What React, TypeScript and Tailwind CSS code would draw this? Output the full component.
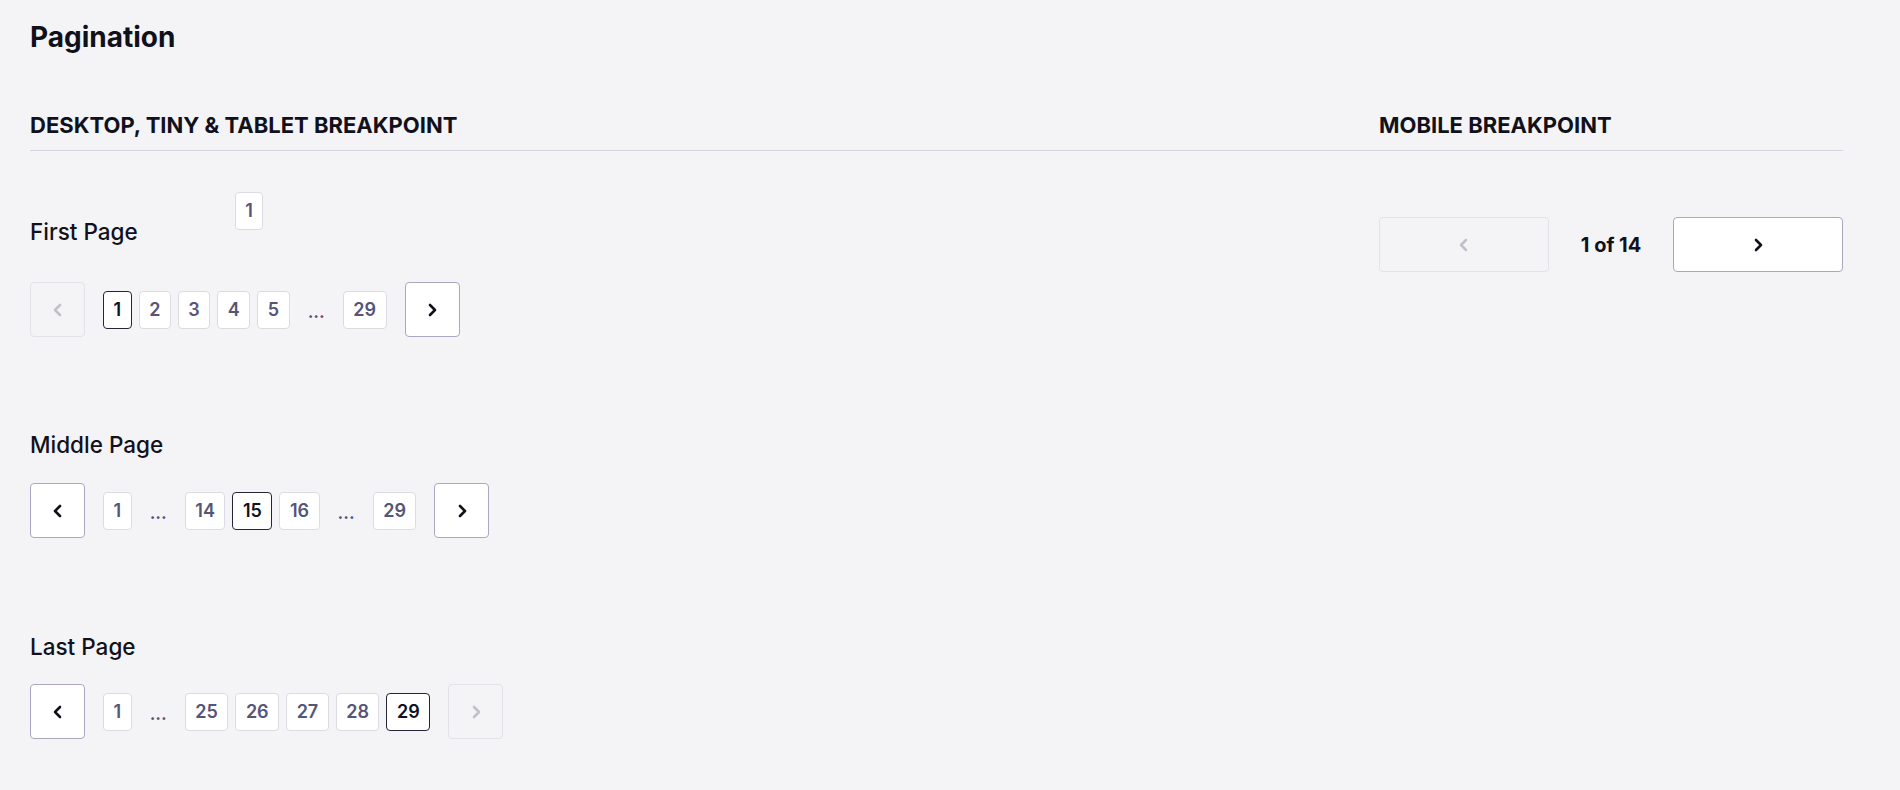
import React from "react";

type Item = number | "...";

const Chevron: React.FC<{ dir: "left" | "right"; disabled?: boolean }> = ({ dir, disabled }) => (
  <svg width="10" height="14" viewBox="0 0 10 14" fill="none">
    <path
      d={dir === "right" ? "M3 2l5 5-5 5" : "M7 2L2 7l5 5"}
      stroke={disabled ? "#c2c1ca" : "#11111c"}
      strokeWidth="2.6"
      strokeLinecap="round"
      strokeLinejoin="round"
    />
  </svg>
);

const NavButton: React.FC<{ dir: "left" | "right"; disabled?: boolean; wide?: boolean }> = ({ dir, disabled, wide }) => (
  <button
    className={`${wide ? "flex-1" : "w-[55px]"} h-[55px] shrink-0 flex items-center justify-center rounded-[4px] border ${
      disabled ? "bg-[#f4f4f7] border-[#e2e2e8]" : "bg-white border-[#a9a8c0]"
    }`}
  >
    <Chevron dir={dir} disabled={disabled} />
  </button>
);

const PageBox: React.FC<{ n: number; active?: boolean }> = ({ n, active }) => (
  <div
    className={`h-[38px] px-[9.5px] flex items-center justify-center rounded-[4px] border bg-white text-[18px] font-semibold leading-none ${
      active ? "border-[#25253a] text-[#11111c]" : "border-[#dcdbe3] text-[#55547a]"
    }`}
  >
    {n}
  </div>
);

const Pager: React.FC<{ items: Item[]; current: number; prevDisabled?: boolean; nextDisabled?: boolean }> = ({
  items,
  current,
  prevDisabled,
  nextDisabled,
}) => (
  <div className="flex items-center">
    <NavButton dir="left" disabled={prevDisabled} />
    <div className="ml-[18px] flex items-center gap-[7px]">
      {items.map((it, i) =>
        it === "..." ? (
          <span key={i} className="mx-[11px] text-[18px] font-semibold text-[#55547a] self-end mb-[8px] leading-none">
            ...
          </span>
        ) : (
          <PageBox key={i} n={it} active={it === current} />
        )
      )}
    </div>
    <div className="ml-[18px]">
      <NavButton dir="right" disabled={nextDisabled} />
    </div>
  </div>
);

export default function App() {
  return (
    <div className="min-h-screen bg-[#f4f4f7] font-['Inter',sans-serif] text-[#11111c] pl-[30px] pr-[57px] pt-[19px]">
      <h1 className="text-[28px] leading-[36px] font-bold">Pagination</h1>

      <div className="mt-[56px] flex border-b border-[#d6d5df] pb-[11px]">
        <h2 className="flex-1 text-[22px] leading-[28px] font-bold">DESKTOP, TINY &amp; TABLET BREAKPOINT</h2>
        <h2 className="w-[464px] text-[22px] leading-[28px] font-bold">MOBILE BREAKPOINT</h2>
      </div>

      <div className="flex">
        <div className="flex-1">
          <div className="mt-[41px] flex items-end">
            <h3 className="text-[22.5px] leading-[28px] font-medium">First Page</h3>
            <div className="ml-[97px] mb-[16px]">
              <PageBox n={1} />
            </div>
          </div>
          <div className="mt-[36px]">
            <Pager items={[1, 2, 3, 4, 5, "...", 29]} current={1} prevDisabled />
          </div>

          <h3 className="mt-[94px] text-[22.5px] leading-[28px] font-medium">Middle Page</h3>
          <div className="mt-[24px]">
            <Pager items={[1, "...", 14, 15, 16, "...", 29]} current={15} />
          </div>

          <h3 className="mt-[95px] text-[22.5px] leading-[28px] font-medium">Last Page</h3>
          <div className="mt-[23px]">
            <Pager items={[1, "...", 25, 26, 27, 28, 29]} current={29} nextDisabled />
          </div>
        </div>

        <div className="w-[464px]">
          <div className="mt-[66px] flex items-center gap-[32px]">
            <NavButton dir="left" disabled wide />
            <span className="text-[20px] font-bold">1 of 14</span>
            <NavButton dir="right" wide />
          </div>
        </div>
      </div>
    </div>
  );
}
